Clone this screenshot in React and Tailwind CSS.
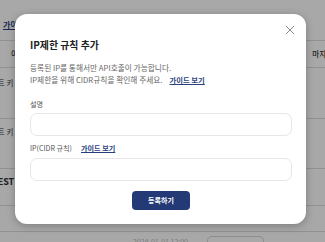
import React from 'react';

const font = { fontFamily: '"Noto Sans CJK KR", "Noto Sans", sans-serif' };

function CloseIcon() {
  return (
    <svg width="10" height="10" viewBox="0 0 10 10" fill="none">
      <path d="M1.2 1.2L8.8 8.8M8.8 1.2L1.2 8.8" stroke="#8a8a8a" strokeWidth="1" strokeLinecap="round" />
    </svg>
  );
}

export default function App() {
  return (
    <div className="relative h-[242px] w-[325px] overflow-hidden bg-white text-[#333]" style={font}>
      {/* Page behind the dialog */}
      <div className="flex h-[40px] items-start pl-[3px] pt-[19px]">
        <span className="text-[8px] font-bold leading-[12px] text-[#2a3f7e] underline">가이드 보기</span>
      </div>
      <div className="flex h-[27px] items-center justify-between border-t border-[#dcdcdc] pl-[11px] text-[7.5px] font-medium">
        <span>이름</span>
        <span className="-mr-[8px] whitespace-nowrap">마지막</span>
      </div>
      <div className="h-[51px] border-t border-[#dcdcdc] pt-[9px] text-[7.5px]">
        <span className="-ml-[16px] whitespace-nowrap">테스트 키</span>
      </div>
      <div className="h-[50px] border-t border-[#dcdcdc] pt-[7px] text-[7.5px]">
        <span className="-ml-[16px] whitespace-nowrap">테스트 키</span>
      </div>
      <div className="h-[37px] border-t border-[#dcdcdc] pt-[6px] text-[9px] font-bold">
        <span className="-ml-[8px] whitespace-nowrap">TEST API</span>
      </div>
      <div className="h-[26px] border-t border-[#dcdcdc]" />
      <div className="flex items-start border-t border-[#dcdcdc] pt-[4px]">
        <span className="ml-[133px] w-[57px] whitespace-nowrap text-[7px] leading-[10px] text-[#bbb]">2024-01-01 12:00</span>
        <span className="ml-[17px] h-[14px] w-[57px] rounded-t-[5px] border border-b-0 border-[#d6d6d6]" />
      </div>

      {/* Dim overlay */}
      <div className="absolute inset-0 bg-black/[0.34]" />

      {/* Dialog */}
      <div className="absolute left-[15px] top-[14px] w-[291px] rounded-[12px] bg-white pb-[14px] pl-[15px] pr-[14px] pt-[24px] shadow-[0_2px_8px_rgba(0,0,0,0.25)]">
        <button className="absolute right-[11px] top-[11px] flex h-[10px] w-[10px] items-center justify-center">
          <CloseIcon />
        </button>

        <h2 className="text-[9.9px] font-bold leading-[14px] text-[#222]">IP제한 규칙 추가</h2>

        <div className="mt-[10px] text-[7.7px] leading-[12px] text-[#666]">
          <p className="whitespace-nowrap">등록된 IP를 통해서만 API호출이 가능합니다.</p>
          <p className="flex items-center whitespace-nowrap">
            <span>IP제한을 위해 CIDR규칙을 확인해 주세요.</span>
            <a className="ml-[7px] text-[7.3px] font-bold text-[#2a3f7e] underline">가이드 보기</a>
          </p>
        </div>

        <label className="mt-[12px] block text-[7.1px] leading-[12px] text-[#555]">설명</label>
        <input className="mt-[3px] block h-[23px] w-full rounded-[7px] border border-[#e6e6e6] bg-white outline-none" />

        <div className="mt-[6px] flex items-center text-[7.1px] leading-[12px]">
          <span className="text-[#555]">IP(CIDR 규칙)</span>
          <a className="ml-[9px] font-bold text-[#2a3f7e] underline">가이드 보기</a>
        </div>
        <input className="mt-[4px] block h-[23px] w-full rounded-[7px] border border-[#e6e6e6] bg-white outline-none" />

        <div className="mt-[10px] flex justify-center">
          <button className="h-[19px] w-[58px] rounded-[4px] bg-[#233a76] text-[7px] font-semibold text-white">
            등록하기
          </button>
        </div>
      </div>
    </div>
  );
}
